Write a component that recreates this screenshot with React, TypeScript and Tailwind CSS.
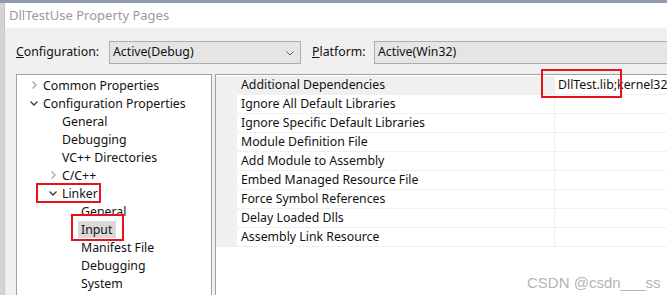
import React from 'react';

type TreeItem = { label: string; level: number; chevron?: 'right' | 'down'; chevronLight?: boolean; selected?: boolean };

const treeItems: TreeItem[] = [
  { label: 'Common Properties', level: 0, chevron: 'right', chevronLight: true },
  { label: 'Configuration Properties', level: 0, chevron: 'down' },
  { label: 'General', level: 1 },
  { label: 'Debugging', level: 1 },
  { label: 'VC++ Directories', level: 1 },
  { label: 'C/C++', level: 1, chevron: 'right', chevronLight: true },
  { label: 'Linker', level: 1, chevron: 'down' },
  { label: 'General', level: 2 },
  { label: 'Input', level: 2, selected: true },
  { label: 'Manifest File', level: 2 },
  { label: 'Debugging', level: 2 },
  { label: 'System', level: 2 },
];

const props = [
  'Additional Dependencies',
  'Ignore All Default Libraries',
  'Ignore Specific Default Libraries',
  'Module Definition File',
  'Add Module to Assembly',
  'Embed Managed Resource File',
  'Force Symbol References',
  'Delay Loaded Dlls',
  'Assembly Link Resource',
];

function Chevron({ dir, light }: { dir: 'right' | 'down'; light?: boolean }) {
  const color = light ? '#a8a8a8' : '#404040';
  return (
    <svg width="10" height="10" viewBox="0 0 10 10" className="shrink-0">
      {dir === 'right' ? (
        <path d="M3.5 1.5 L7 5 L3.5 8.5" fill="none" stroke={color} strokeWidth="1.4" />
      ) : (
        <path d="M1.5 3.5 L5 7 L8.5 3.5" fill="none" stroke={color} strokeWidth="1.4" />
      )}
    </svg>
  );
}

function Dropdown({ value, chevron }: { value: string; chevron?: boolean }) {
  return (
    <div className="h-[23px] flex-1 flex items-center justify-between bg-[#e5e5e5] border border-[#adadad] pl-[3px] pr-[5px]">
      <span className="whitespace-nowrap">{value}</span>
      {chevron && (
        <svg width="10" height="10" viewBox="0 0 10 10">
          <path d="M1.5 3.5 L5 7 L8.5 3.5" fill="none" stroke="#606060" strokeWidth="1" />
        </svg>
      )}
    </div>
  );
}

export default function App() {
  return (
    <div
      className="w-[667px] h-[295px] overflow-hidden flex flex-col bg-white text-[12.3px] text-[#111]"
      style={{ fontFamily: '"Noto Sans", "Noto Sans CJK TC", sans-serif' }}
    >
      <div className="h-[3px] bg-[#8f9aae] shrink-0" />
      <div className="flex flex-1 min-h-0">
        <div className="w-[5px] shrink-0 bg-[#d6d3cf] border-r border-[#c8c8c8]" />
        <div className="flex-1 flex flex-col min-w-0">
          <div className="h-[25px] shrink-0 bg-white flex items-center pl-[4px] text-[13px] text-[#9a9a9a]">
            DllTestUse Property Pages
          </div>
          <div className="flex-1 bg-[#f0f0f0] flex flex-col pl-[11px] pt-[13px] min-h-0">
            <div className="flex items-center h-[23px] shrink-0">
              <span className="w-[93px] shrink-0">
                <span className="underline">C</span>onfiguration:
              </span>
              <div className="w-[192px] shrink-0 flex">
                <Dropdown value="Active(Debug)" chevron />
              </div>
              <span className="ml-[11px] w-[62px] shrink-0">
                <span className="underline">P</span>latform:
              </span>
              <div className="flex-1 flex -mr-[10px]">
                <Dropdown value="Active(Win32)" />
              </div>
            </div>
            <div className="flex flex-1 mt-[10px] min-h-0">
              <div className="w-[196px] shrink-0 bg-white border border-[#a0a0a0] border-b-0 pt-[1px] relative">
                {treeItems.map((it, i) => (
                  <div
                    key={i}
                    className="h-[18px] flex items-center whitespace-nowrap"
                    style={{ paddingLeft: 9 + it.level * 19 }}
                  >
                    <div className="w-[16px] flex justify-center shrink-0">
                      {it.chevron && <Chevron dir={it.chevron} light={it.chevronLight} />}
                    </div>
                    <span
                      className={
                        it.selected
                          ? 'bg-[#d9d9d9] pl-[3px] pr-[4px] -ml-[2px] leading-[17px]'
                          : 'px-[1px] leading-[17px]'
                      }
                    >
                      {it.label}
                    </span>
                  </div>
                ))}
                <div className="absolute left-[19px] top-[108px] w-[65px] h-[20px] border-2 border-[#e8131a]" />
                <div className="absolute left-[54px] top-[139px] w-[53px] h-[27px] border-2 border-[#e8131a]" />
              </div>
              <div className="flex-1 min-w-0 ml-[3px] bg-white border border-[#a0a0a0] border-r-0 border-b-0 pt-[1px] relative">
                {props.map((p, i) => (
                  <div key={i} className="flex h-[19px]">
                    <div className="w-[21px] bg-[#f0f0f0] shrink-0" />
                    <div
                      className={
                        'w-[318px] shrink-0 flex items-center pl-[4px] border-r border-[#f0f0f0] whitespace-nowrap ' +
                        (i === 0 ? 'bg-[#f0f0f0]' : 'bg-white border-b')
                      }
                    >
                      {p}
                    </div>
                    <div className="flex-1 min-w-0 flex items-center pl-[3px] bg-white border-b border-[#f0f0f0] whitespace-nowrap overflow-hidden">
                      {i === 0 ? 'DllTest.lib;kernel32' : ''}
                    </div>
                  </div>
                ))}
                <div className="absolute left-[325px] top-[-6px] w-[81px] h-[29px] border-2 border-[#e8131a]" />
                <div
                  className="absolute left-[311px] top-[197px] text-[15px] text-[#b4b4b4] whitespace-nowrap"
                  style={{ fontFamily: '"Liberation Sans", sans-serif' }}
                >
                  CSDN @csdn___ss
                </div>
              </div>
            </div>
          </div>
        </div>
      </div>
    </div>
  );
}
